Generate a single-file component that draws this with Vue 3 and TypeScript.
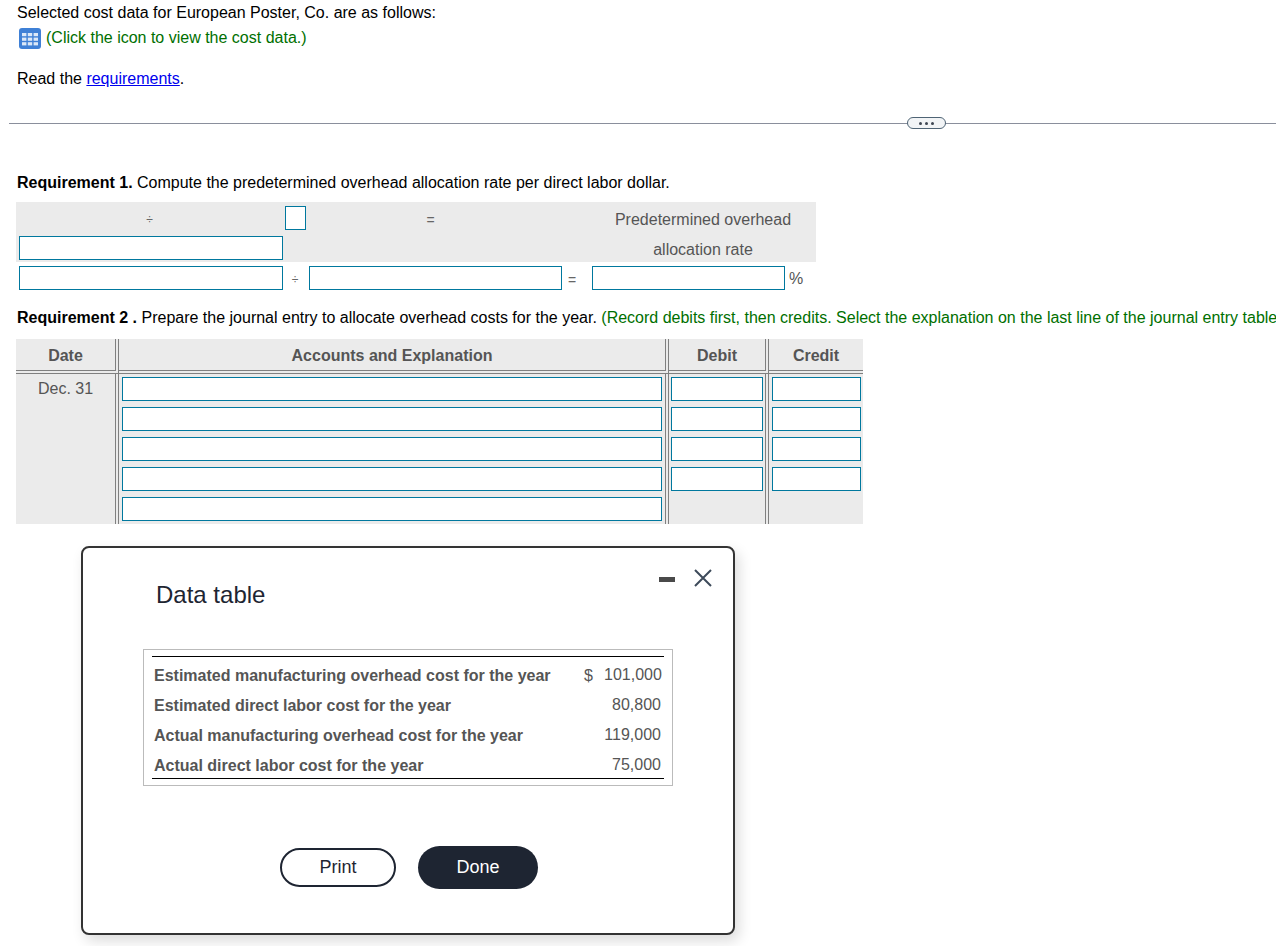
<script setup lang="ts">
const journalRows = [
  { date: 'Dec. 31', amounts: true },
  { date: '', amounts: true },
  { date: '', amounts: true },
  { date: '', amounts: true },
  { date: '', amounts: false },
]
const costs = [
  { label: 'Estimated manufacturing overhead cost for the year', sign: '$', value: '101,000' },
  { label: 'Estimated direct labor cost for the year', sign: '', value: '80,800' },
  { label: 'Actual manufacturing overhead cost for the year', sign: '', value: '119,000' },
  { label: 'Actual direct labor cost for the year', sign: '', value: '75,000' },
]
</script>

<template>
  <main class="page">
    <p class="line">Selected cost data for European Poster, Co. are as follows:</p>
    <p class="line icon-line">
      <svg class="grid-icon" width="22" height="21" viewBox="0 0 22 21" aria-hidden="true">
        <rect x="0" y="0" width="22" height="21" rx="3" fill="#3f80d6" />
        <g fill="#dbe8f8">
          <rect x="3" y="5" width="4.4" height="3.2" />
          <rect x="8.8" y="5" width="4.4" height="3.2" />
          <rect x="14.6" y="5" width="4.4" height="3.2" />
          <rect x="3" y="9.6" width="4.4" height="3.2" />
          <rect x="8.8" y="9.6" width="4.4" height="3.2" />
          <rect x="14.6" y="9.6" width="4.4" height="3.2" />
          <rect x="3" y="14.2" width="4.4" height="3.2" />
          <rect x="8.8" y="14.2" width="4.4" height="3.2" />
          <rect x="14.6" y="14.2" width="4.4" height="3.2" />
        </g>
      </svg>
      <span class="green">(Click the icon to view the cost data.)</span>
    </p>
    <p class="line read">Read the <a href="#" class="link">requirements</a>.</p>

    <div class="divider">
      <span class="handle"><i></i><i></i><i></i></span>
    </div>

    <p class="line req-one"><b>Requirement 1.</b> Compute the predetermined overhead allocation rate per direct labor dollar.</p>

    <div class="calc shaded">
      <div class="result-head top">Predetermined overhead</div>
      <div class="cell first"><input class="box" /></div>
      <div class="op">÷</div>
      <div class="cell second"><input class="box" /></div>
      <div class="op equals">=</div>
      <div class="result-head">allocation rate</div>
    </div>
    <div class="calc">
      <div class="cell first"><input class="box" /></div>
      <div class="op">÷</div>
      <div class="cell second"><input class="box" /></div>
      <div class="op equals">=</div>
      <div class="cell result"><input class="box" /><span class="percent">%</span></div>
    </div>

    <p class="line req-two"><b>Requirement 2 .</b> Prepare the journal entry to allocate overhead costs for the year. <span class="green">(Record debits first, then credits. Select the explanation on the last line of the journal entry table.)</span></p>

    <div class="journal">
      <div class="jhead jcol-date">Date</div>
      <div class="jhead jcol-acct">Accounts and Explanation</div>
      <div class="jhead jcol-debit">Debit</div>
      <div class="jhead jcol-credit">Credit</div>
      <template v-for="(row, i) in journalRows" :key="i">
        <div class="jcell jcol-date date-text">{{ row.date }}</div>
        <div class="jcell jcol-acct"><input class="box" /></div>
        <div class="jcell jcol-debit"><input v-if="row.amounts" class="box" /></div>
        <div class="jcell jcol-credit"><input v-if="row.amounts" class="box" /></div>
      </template>
    </div>

    <section class="modal">
      <div class="window-tools">
        <span class="minimize"></span>
        <svg width="20" height="20" viewBox="0 0 20 20" aria-hidden="true">
          <path d="M2 2 L18 18 M18 2 L2 18" stroke="#3d4a5a" stroke-width="2" fill="none" />
        </svg>
      </div>
      <h2 class="modal-title">Data table</h2>
      <div class="data-frame">
        <div class="data-rules">
          <div v-for="c in costs" :key="c.label" class="data-row">
            <span class="data-label">{{ c.label }}</span>
            <span class="data-sign">{{ c.sign }}</span>
            <span class="data-value">{{ c.value }}</span>
          </div>
        </div>
      </div>
      <div class="actions">
        <button class="btn print">Print</button>
        <button class="btn done">Done</button>
      </div>
    </section>
  </main>
</template>

<style scoped>
.page {
  position: relative;
  width: 1276px;
  height: 946px;
  overflow: hidden;
  font-family: "Liberation Sans", Arial, sans-serif;
  font-size: 16px;
  color: #000;
  background: #fff;
}
.line {
  margin: 0;
  padding-left: 17px;
  line-height: 25px;
  white-space: nowrap;
}
.icon-line {
  display: flex;
  align-items: center;
  padding-left: 19px;
  gap: 5px;
}
.grid-icon {
  flex: none;
  margin-top: 1px;
}
.green {
  color: #006f00;
}
.read {
  margin-top: 16px;
}
.link {
  color: #0000ee;
  text-decoration: underline;
}
.divider {
  position: relative;
  margin: 32px 0 0 9px;
  height: 1px;
  background: #8a8f9c;
}
.handle {
  position: absolute;
  left: 898px;
  top: -6px;
  width: 39px;
  height: 12px;
  box-sizing: border-box;
  display: flex;
  align-items: center;
  justify-content: center;
  gap: 3px;
  border: 1px solid #4f6475;
  border-radius: 6px;
  background: #f2f4f6;
}
.handle i {
  width: 3px;
  height: 3px;
  border-radius: 50%;
  background: #3e4652;
}
.req-one {
  margin-top: 46px;
}
.calc {
  display: grid;
  grid-template-columns: 267px 24px 256px 27px 226px;
  grid-auto-rows: 30px;
  width: 800px;
  margin-left: 16px;
  color: #555;
}
.shaded {
  background: #ebebeb;
  margin-top: 7px;
}
.result-head {
  grid-column: 5;
  text-align: center;
  line-height: 36px;
}
.result-head.top {
  grid-row: 1;
}
.shaded .first {
  grid-column: 1;
  grid-row: 2;
}
.shaded .result-head:not(.top) {
  grid-row: 2;
}
.cell {
  display: flex;
  align-items: flex-start;
  padding-top: 4px;
  box-sizing: border-box;
}
.first {
  padding-left: 3px;
}
.second {
  padding-left: 2px;
  padding-right: 1px;
}
.result {
  padding-left: 2px;
  padding-right: 31px;
  position: relative;
}
.percent {
  position: absolute;
  left: 199px;
  top: 7px;
  font-size: 16px;
  line-height: 20px;
}
.op {
  text-align: center;
  font-size: 12px;
  line-height: 36px;
  color: #666;
}
.equals {
  padding-right: 9px;
  font-size: 14px;
}
.box {
  display: block;
  width: 100%;
  height: 24px;
  box-sizing: border-box;
  margin: 0;
  padding: 0;
  border: 1px solid #00789e;
  background: #fff;
  border-radius: 0;
  outline: none;
}
.req-two {
  margin-top: 13px;
}
.journal {
  display: grid;
  grid-template-columns: 103px 550px 100px 94px;
  grid-template-rows: 35px repeat(5, 30px);
  width: 847px;
  height: 185px;
  margin: 9px 0 0 16px;
  background: #ebebeb;
  color: #555;
}
.jhead {
  font-weight: 700;
  text-align: center;
  line-height: 34px;
  border-bottom: 4px double #808080;
  box-sizing: border-box;
}
.jcol-date,
.jcol-acct,
.jcol-debit {
  border-right: 4px double #808080;
  box-sizing: border-box;
}
.jcell {
  display: flex;
  padding-top: 3px;
  box-sizing: border-box;
}
.jcell.jcol-acct {
  padding-left: 3px;
  padding-right: 3px;
}
.jcell.jcol-debit {
  padding-left: 2px;
  padding-right: 2px;
}
.jcell.jcol-credit {
  padding-left: 3px;
  padding-right: 2px;
}
.date-text {
  justify-content: center;
  line-height: 30px;
  padding-top: 0;
}
.modal {
  position: absolute;
  left: 81px;
  top: 546px;
  width: 654px;
  height: 389px;
  box-sizing: border-box;
  border: 2px solid #333;
  border-radius: 8px;
  background: #fff;
  box-shadow: 4px 6px 14px rgba(0, 0, 0, 0.14);
}
.window-tools {
  position: absolute;
  top: 20px;
  right: 20px;
  display: flex;
  align-items: center;
  gap: 18px;
}
.minimize {
  width: 16px;
  height: 5px;
  margin-top: 2px;
  background: #4a4a4a;
}
.modal-title {
  margin: 33px 0 0 73px;
  font-size: 24px;
  font-weight: 400;
  line-height: 28px;
  color: #1e2532;
}
.data-frame {
  width: 530px;
  height: 137px;
  box-sizing: border-box;
  margin: 40px 0 0 60px;
  padding: 6px 8px 7px;
  border: 1px solid #bbb;
}
.data-rules {
  border-top: 1px solid #000;
  border-bottom: 1px solid #000;
  height: 123px;
  box-sizing: border-box;
  padding-top: 4px;
}
.data-row {
  display: flex;
  height: 30px;
  line-height: 30px;
  color: #555;
  padding-left: 2px;
  padding-right: 3px;
}
.data-label {
  font-weight: 700;
  flex: 1;
}
.data-sign {
  width: 20px;
}
.data-value {
  width: 57px;
  text-align: right;
  margin-top: -1px;
}
.actions {
  display: flex;
  align-items: center;
  gap: 22px;
  margin: 60px 0 0 197px;
}
.btn {
  font-family: "Liberation Sans", Arial, sans-serif;
  font-size: 18px;
  box-sizing: border-box;
  padding: 0;
}
.print {
  width: 116px;
  height: 39px;
  border: 2px solid #1e2532;
  border-radius: 20px;
  background: #fff;
  color: #1e2532;
}
.done {
  width: 120px;
  height: 43px;
  border: none;
  border-radius: 22px;
  background: #1e2532;
  color: #fff;
}
</style>
